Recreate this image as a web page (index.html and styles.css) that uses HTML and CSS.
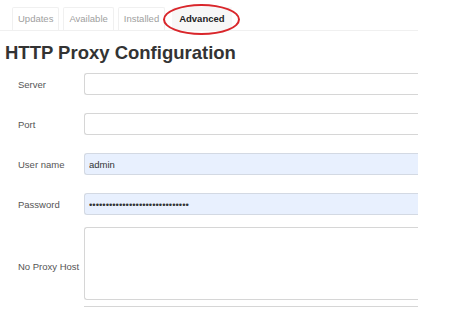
FILE: index.html
```html
<!DOCTYPE html>
<html lang="en">
<head>
  <meta charset="UTF-8" />
  <meta name="viewport" content="width=device-width, initial-scale=1.0" />
  <title>HTTP Proxy Configuration</title>
  <link rel="stylesheet" href="styles.css">
</head>
<body>
  <div class="page">
    <ul class="tabs">
      <li class="tab">Updates</li>
      <li class="tab">Available</li>
      <li class="tab">Installed</li>
      <li class="tab active">Advanced<span class="mark"></span></li>
    </ul>

    <h1>HTTP Proxy Configuration</h1>

    <form class="proxy-form">
      <div class="row">
        <label for="server">Server</label>
        <input type="text" id="server" />
      </div>
      <div class="row">
        <label for="port">Port</label>
        <input type="text" id="port" />
      </div>
      <div class="row">
        <label for="user">User name</label>
        <input type="text" id="user" class="filled" value="admin" />
      </div>
      <div class="row">
        <label for="pass">Password</label>
        <input type="password" id="pass" class="filled" value="abcdefghijklmnopqrstuvwxyz0123" />
      </div>
      <div class="row tall">
        <label for="noproxy">No Proxy Host</label>
        <textarea id="noproxy"></textarea>
      </div>
      <div class="row">
        <span class="spacer"></span>
        <div class="next-field"></div>
      </div>
    </form>
  </div>
</body>
</html>
```

FILE: styles.css
```css
body {
  margin: 0;
  font-family: "Liberation Sans", Arial, sans-serif;
  background: #fff;
  color: #333;
}

.page {
  width: 418px;
  padding-top: 7px;
}

.tabs {
  display: flex;
  gap: 4px;
  list-style: none;
  margin: 0;
  padding: 0 0 0 12px;
  border-bottom: 1px solid #f0f0f0;
}

.tab {
  position: relative;
  padding: 5px 5px 6px;
  font-size: 9.5px;
  color: #a0a0a0;
  border: 1px solid #f0f0f0;
  border-bottom: none;
  border-radius: 2px 2px 0 0;
}

.tab.active {
  color: #222;
  font-weight: bold;
  background: #f7f7f7;
  margin-left: 3px;
  padding: 5px 6px 6px;
  border-color: #f7f7f7;
}

.mark {
  position: absolute;
  left: -10px;
  top: -4px;
  width: 73px;
  height: 27px;
  border: 2px solid #d9262b;
  border-radius: 50%;
}

h1 {
  margin: 10px 0 0 5px;
  font-size: 18.5px;
  font-weight: bold;
  color: #333;
  line-height: 24px;
}

.proxy-form {
  display: flex;
  flex-direction: column;
  gap: 18px;
  margin-top: 8px;
}

.row {
  display: flex;
  align-items: center;
}

.row label,
.spacer {
  width: 66px;
  padding-left: 18px;
  font-size: 9.5px;
  color: #555;
  flex-shrink: 0;
}

.row input,
.row textarea {
  flex: 1;
  height: 22px;
  box-sizing: border-box;
  margin: 0;
  padding: 0 4px;
  border: 1px solid #d6d6d6;
  border-right: none;
  border-radius: 3px 0 0 3px;
  font-family: "Liberation Sans", Arial, sans-serif;
  font-size: 9.5px;
  color: #333;
  background: #fff;
}

.row input.filled {
  background: #e8f0fe;
  border-color: #d3d9e3;
}

.row.tall {
  margin-top: -6px;
}

.row.tall label {
  padding-top: 6px;
}

.row.tall textarea {
  height: 73px;
  resize: none;
}

.next-field {
  flex: 1;
  height: 4px;
  border-top: 1px solid #d6d6d6;
  margin-top: -19px;
}
```
